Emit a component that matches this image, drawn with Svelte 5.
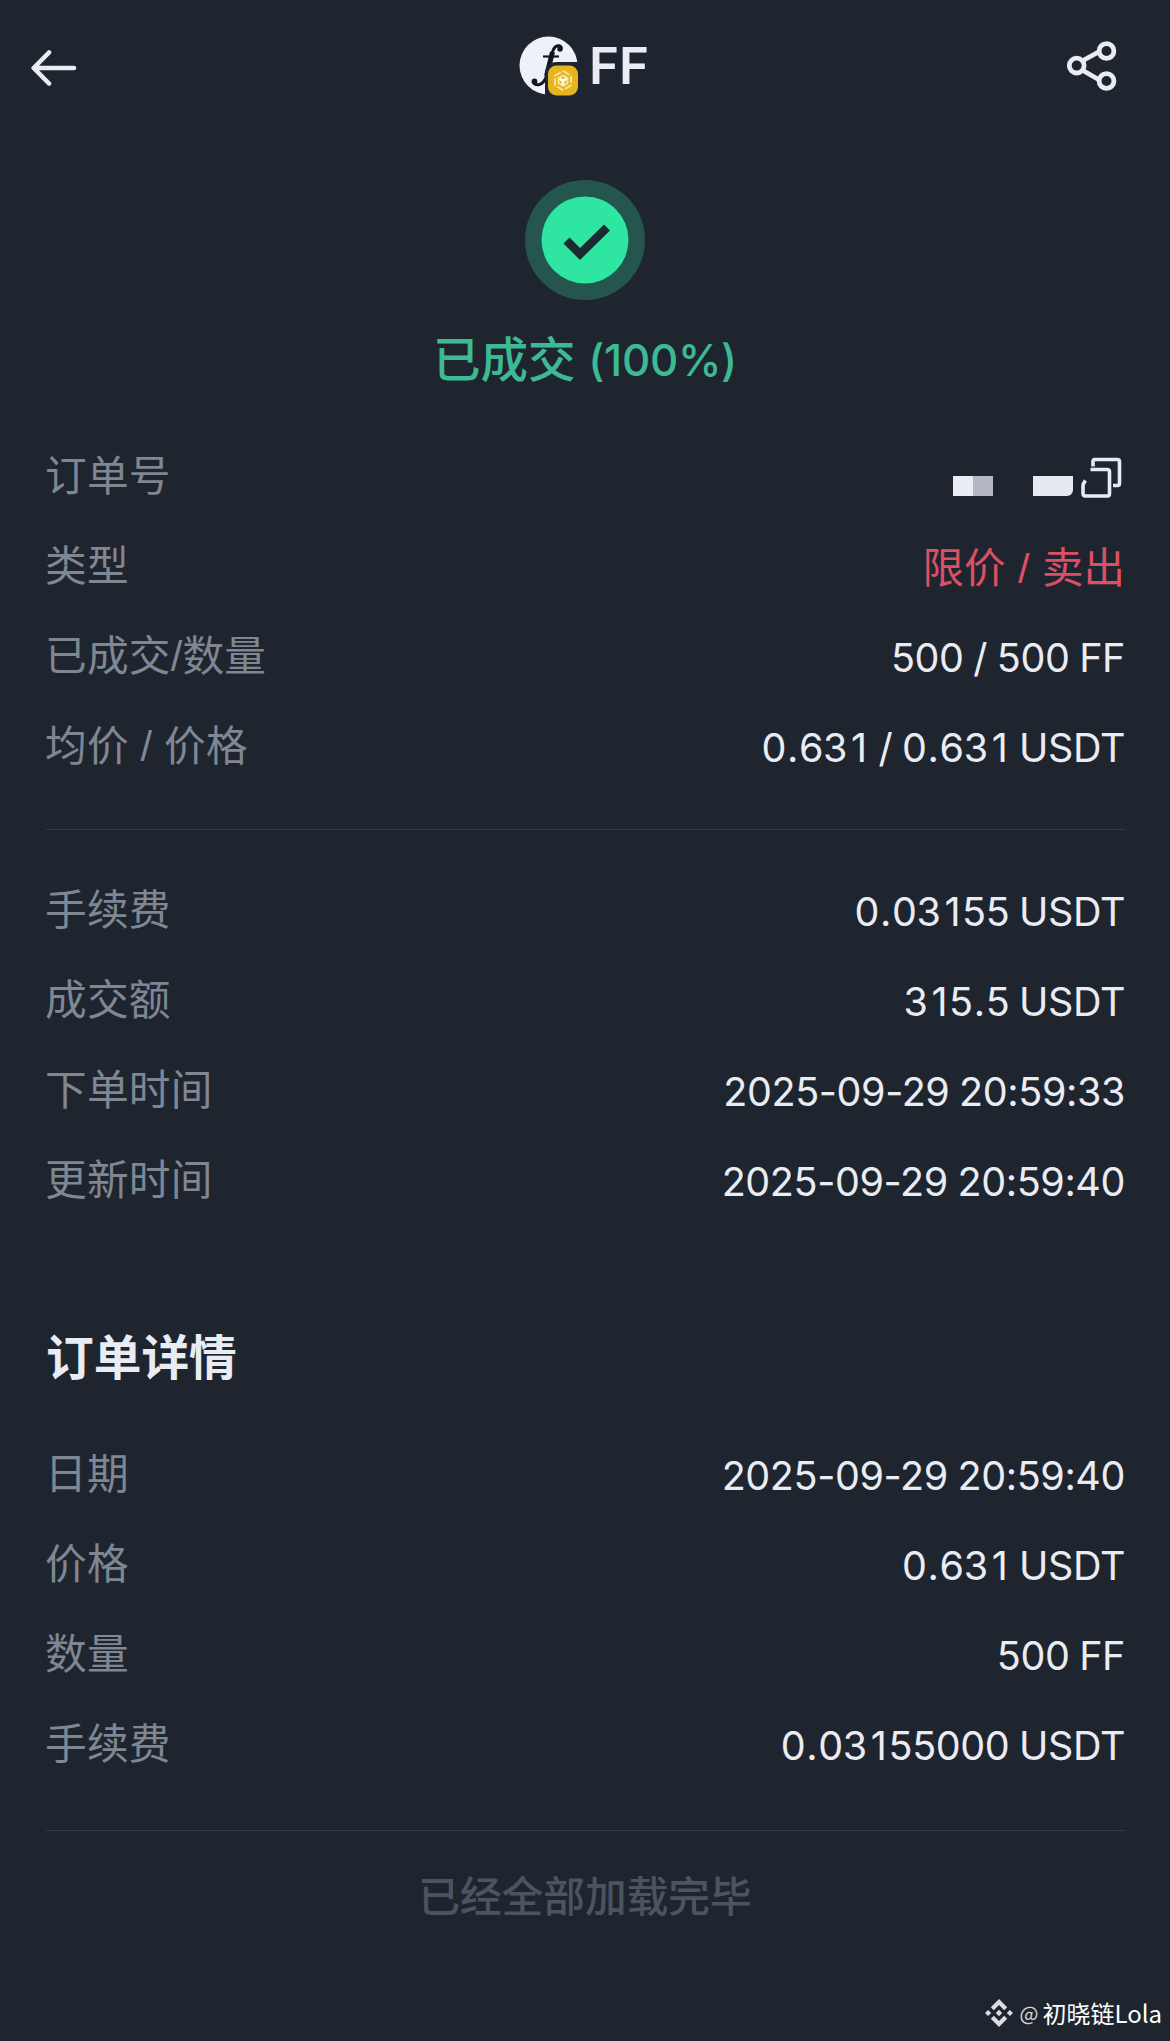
<script lang="ts">
	type Row = { label: string; value: string; kind?: 'id' | 'sell' | 'amount' };

	const summary: Row[] = [
		{ label: '订单号', value: '', kind: 'id' },
		{ label: '类型', value: '限价 / 卖出', kind: 'sell' },
		{ label: '已成交/数量', value: '500 / 500 FF' },
		{ label: '均价 / 价格', value: '0.631 / 0.631 USDT', kind: 'amount' }
	];

	const totals: Row[] = [
		{ label: '手续费', value: '0.03155 USDT', kind: 'amount' },
		{ label: '成交额', value: '315.5 USDT', kind: 'amount' },
		{ label: '下单时间', value: '2025-09-29 20:59:33' },
		{ label: '更新时间', value: '2025-09-29 20:59:40' }
	];

	const details: Row[] = [
		{ label: '日期', value: '2025-09-29 20:59:40' },
		{ label: '价格', value: '0.631 USDT', kind: 'amount' },
		{ label: '数量', value: '500 FF' },
		{ label: '手续费', value: '0.03155000 USDT', kind: 'amount' }
	];

	// narrow glyphs get their own span so amounts keep an even digit pitch
	const split = (value: string) => value.split(/([1.])/).filter(Boolean);
</script>

{#snippet rows(items: Row[])}
	<dl class="rows">
		{#each items as row}
			<div class="row">
				<dt>{row.label}</dt>
				<dd class={row.kind ?? ''}>
					{#if row.kind === 'id'}
						<span class="mask first"></span>
						<span class="mask second"></span>
						<svg class="copy" width="42" height="42" viewBox="0 0 42 42" fill="none">
							<path d="M12 9.5V4.5Q12 2.5 14 2.5H36.5Q38.5 2.5 38.5 4.5V26Q38.5 28.5 36.5 28.5H32" />
							<path d="M9.5 12.5H26Q28.5 12.5 28.5 14.5V36.5Q28.5 39 26.5 39H4.5Q2 39 2 36.5V29Q2 26.5 4.5 23.5" />
						</svg>
					{:else if row.kind === 'amount'}
						{#each split(row.value) as part}<span class:one={part === '1'} class:dot={part === '.'}>{part}</span>{/each}
					{:else}
						{row.value}
					{/if}
				</dd>
			</div>
		{/each}
	</dl>
{/snippet}

<div class="page">
	<header>
		<button class="back" aria-label="返回">
			<svg width="46" height="36" viewBox="0 0 46 36" fill="none">
				<path d="M18 2.5L2.7 18L18 33.5M3.5 18H43" />
			</svg>
		</button>
		<div class="pair">
			<svg width="60" height="60" viewBox="0 0 60 60">
				<circle cx="29.5" cy="29.5" r="29" fill="#eef1f7" />
				<path
					d="M42.5 13C42 8.5 36.5 8.5 34 14.5C31.5 20 29.5 36 26.5 42.5C24 48.5 18 50.5 14.5 47"
					fill="none"
					stroke="#12161d"
					stroke-width="3"
				/>
				<path d="M33.5 16L27.5 40" stroke="#12161d" stroke-width="5" />
				<path d="M24 20.5H40" stroke="#12161d" stroke-width="2.2" />
				<circle cx="41" cy="13" r="2.7" fill="#12161d" />
				<circle cx="15.5" cy="45.5" r="2.9" fill="#12161d" />
				<path d="M26 60V39Q26 26 38 26H60V60Z" fill="#1f252f" />
				<rect x="29" y="29.5" width="30" height="30" rx="8.5" fill="#e6b41e" />
				<g fill="none" stroke="#fbe99a" stroke-width="1.8">
					<path d="M44 35L52 39.7V49.3L44 54L36 49.3V39.7Z" stroke-dasharray="7.3 2" />
					<path d="M39.5 42L44 39.5L48.5 42V47L44 50L39.5 47Z" />
					<path d="M40.5 42.5L44 45L47.5 42.5M44 45V49" stroke="#fffbe6" stroke-width="2.8" />
				</g>
			</svg>
			<h1>FF</h1>
		</div>
		<button class="share" aria-label="分享">
			<svg width="52" height="52" viewBox="0 0 52 52" fill="none">
				<path d="M17 20.5L32.5 12M17 30.5L32.5 39.5" />
				<circle cx="10.7" cy="25.6" r="7.4" />
				<circle cx="40.5" cy="11" r="7.4" />
				<circle cx="40.5" cy="41" r="7.4" />
			</svg>
		</button>
	</header>

	<section class="status">
		<svg width="120" height="120" viewBox="0 0 120 120">
			<circle cx="60" cy="60" r="60" fill="#24564d" />
			<circle cx="60" cy="60" r="43.5" fill="#2fe5a2" />
			<path d="M41.5 60.5L55 74L82 47.5" fill="none" stroke="#1c2b31" stroke-width="8.5" />
		</svg>
		<p>已成交 <span>(100%)</span></p>
	</section>

	{@render rows(summary)}
	<hr class="mid" />
	{@render rows(totals)}

	<h2>订单详情</h2>

	{@render rows(details)}
	<hr class="end" />

	<p class="done">已经全部加载完毕</p>

	<footer>
		<svg width="28" height="28" viewBox="0 0 28 28" fill="#dcdde0">
			<path d="M14 0L22.2 8.2L19.2 11.2L14 6L8.8 11.2L5.8 8.2Z" />
			<path d="M14 28L22.2 19.8L19.2 16.8L14 22L8.8 16.8L5.8 19.8Z" />
			<path d="M14 10.8L17.2 14L14 17.2L10.8 14Z" />
			<path d="M3.1 10.9L6.2 14L3.1 17.1L0 14Z" />
			<path d="M24.9 10.9L28 14L24.9 17.1L21.8 14Z" />
		</svg>
		<span class="at">@</span>
		<span>初晓链Lola</span>
	</footer>
</div>

<style>
	:global(body) {
		background: #1f252f;
	}

	.page {
		box-sizing: border-box;
		width: 1170px;
		height: 2041px;
		display: flex;
		flex-direction: column;
		overflow: hidden;
		background: #1f252f;
		color: #eaecf4;
		font-family: Inter, 'Noto Sans CJK SC', sans-serif;
	}

	h1,
	h2,
	p,
	dl,
	dt,
	dd,
	hr {
		margin: 0;
		padding: 0;
	}

	header {
		display: flex;
		align-items: center;
		justify-content: space-between;
		height: 132px;
		padding: 0 50px 0 31px;
	}

	button {
		display: flex;
		padding: 0;
		border: none;
		background: none;
	}

	.back,
	.share {
		width: 54px;
	}

	.back path {
		stroke: #eaecf4;
		stroke-width: 4.6;
		stroke-linecap: round;
		stroke-linejoin: round;
	}

	.back {
		padding-top: 4px;
	}

	.share path,
	.share circle {
		stroke: #eaecf4;
		stroke-width: 4.8;
	}

	.pair {
		display: flex;
		align-items: center;
		gap: 10px;
		padding-left: 17px;
	}

	h1 {
		font-size: 51px;
		font-weight: 600;
		line-height: 60px;
	}

	.status {
		display: flex;
		flex-direction: column;
		align-items: center;
		height: 298px;
		padding-top: 48px;
		box-sizing: border-box;
	}

	.status p {
		margin-top: 25px;
		color: #3db993;
		font-size: 47.5px;
		font-weight: 500;
		line-height: 70px;
		white-space: nowrap;
	}

	.status span {
		font-size: 43.8px;
		letter-spacing: -0.3px;
		vertical-align: 1px;
	}

	.rows {
		padding: 0 45px;
	}

	.row {
		display: flex;
		align-items: center;
		justify-content: space-between;
		height: 90px;
	}

	dt {
		padding-top: 3px;
		color: #7f8793;
		font-family: 'Liberation Sans', 'Noto Sans CJK SC', sans-serif;
		font-size: 41.7px;
		letter-spacing: 0.2px;
		line-height: 60px;
	}

	dd {
		padding-top: 6px;
		font-size: 39.5px;
		letter-spacing: -0.4px;
		line-height: 60px;
		white-space: nowrap;
		word-spacing: -1px;
	}

	dd.sell {
		padding-top: 8px;
		color: #dd4f64;
		font-family: 'Liberation Sans', 'Noto Sans CJK SC', sans-serif;
		font-size: 41.5px;
		letter-spacing: 0;
		word-spacing: 1px;
	}

	dd.id {
		display: flex;
		align-items: center;
		padding-right: 2px;
	}

	.one {
		padding: 0 2px 0 4px;
	}

	.dot {
		padding: 0 1px;
	}

	.mask {
		width: 40px;
		height: 20px;
		margin-top: 15px;
	}

	.first {
		background: linear-gradient(90deg, #e9ecf2 50%, #b5b8c4 50%);
	}

	.second {
		margin-left: 40px;
		border-bottom-right-radius: 6px;
		background: #e6e9ef;
	}

	.copy {
		margin-left: 8px;
	}

	.copy path {
		stroke: #e6eaf5;
		stroke-width: 3.6;
	}

	hr {
		flex: none;
		height: 1px;
		margin: 0 44px 0 46px;
		border: none;
		background: #333a44;
	}

	.mid {
		margin-top: 39px;
		margin-bottom: 34px;
	}

	h2 {
		margin: 99px 46px 35px;
		font-size: 47.7px;
		font-weight: 700;
		line-height: 70px;
	}

	.end {
		margin-top: 42px;
	}

	.done {
		margin-top: 36px;
		color: #4c545f;
		font-size: 41.7px;
		font-weight: 500;
		line-height: 60px;
		text-align: center;
	}

	footer {
		display: flex;
		align-items: center;
		justify-content: flex-end;
		margin-top: auto;
		padding: 0 8px 10px 0;
		color: #fff;
		font-family: 'Noto Sans CJK SC', sans-serif;
		font-size: 24px;
		line-height: 36px;
	}

	.at {
		margin: 0 4px 0 6px;
		color: #d3d5d9;
		font-size: 20px;
	}
</style>
